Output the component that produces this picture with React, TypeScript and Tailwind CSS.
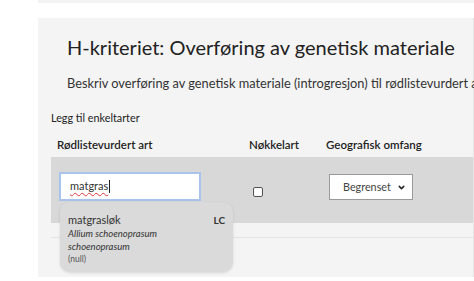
import { ChevronDown } from "lucide-react"

const FONT = { fontFamily: 'Lato, "Noto Sans", sans-serif' }

export default function App() {
  return (
    <div className="relative h-[281px] w-[474px] overflow-hidden bg-white text-[#222]" style={FONT}>
      <div className="ml-[38px] h-[3px] bg-[#f3f3f3]" />

      {/* criterion panel */}
      <div className="relative ml-[38px] mt-[15px] h-[259px] border-r border-[#e6e6e6] bg-[#f4f4f4] px-[13px] pt-[16px]">
        <h2 className="whitespace-nowrap pl-[16px] text-[20px] leading-[26px] text-[#222]">
          H-kriteriet: Overføring av genetisk materiale
        </h2>
        <p className="mt-[14px] whitespace-nowrap pl-[16px] text-[12.8px] leading-[18px] text-[#333]">
          Beskriv overføring av genetisk materiale (introgresjon) til rødlistevurdert art
        </p>

        <p className="mt-[18px] text-[10.8px] leading-[16px] text-[#222]">Legg til enkeltarter</p>

        {/* table header */}
        <div className="mt-[7px] flex h-[24px] items-center text-[11.5px] font-semibold text-[#222]">
          <div className="w-[198px] pl-[6px]">Rødlistevurdert art</div>
          <div className="w-[77px]">Nøkkelart</div>
          <div>Geografisk omfang</div>
        </div>

        {/* active row */}
        <div className="-mr-[13px] flex h-[66px] bg-[#d8d8d8]">
          <div className="w-[198px] pl-[8px] pt-[15px]">
            <div className="flex h-[29px] w-[142px] items-center border-2 border-[#a9c4ea] bg-white pl-[9px] text-[11px] text-[#333]">
              <span className="underline decoration-[#e03b3b] decoration-wavy decoration-1 underline-offset-2">
                matgras
              </span>
              <span className="ml-px h-[13px] w-px bg-[#222]" />
            </div>
          </div>
          <div className="w-[77px] pl-[4px] pt-[30px]">
            <div className="h-[10px] w-[10px] rounded-[2px] border border-[#555] bg-white" />
          </div>
          <div className="pl-[3px] pt-[17px]">
            <div className="flex h-[26px] w-[84px] items-center justify-between border border-[#9a9a9a] bg-white pl-[13px] pr-[6px] text-[10.8px] text-[#444]">
              <span>Begrenset</span>
              <ChevronDown className="h-[9px] w-[9px] text-[#222]" strokeWidth={4} />
            </div>
          </div>
        </div>

        <div className="-mr-[13px] mt-[14px] border-t border-[#e4e4e4]" />

        {/* autocomplete menu */}
        <div className="absolute left-[22px] top-[184px] h-[70px] w-[173px] rounded-[10px] bg-[#dadada] px-[8px] pt-[11px] shadow-[0_1px_3px_rgba(0,0,0,0.12)]">
          <div className="flex items-start justify-between">
            <span className="text-[11px] leading-[14px] text-[#333]">matgrasløk</span>
            <span className="text-[10px] font-bold leading-[14px] text-[#333]">LC</span>
          </div>
          <div className="text-[9.5px] italic leading-[13px] text-[#333]">Allium schoenoprasum</div>
          <div className="text-[9.5px] italic leading-[13px] text-[#333]">schoenoprasum</div>
          <div className="text-[8.5px] leading-[13px] text-[#555]">(null)</div>
        </div>
      </div>
    </div>
  )
}
